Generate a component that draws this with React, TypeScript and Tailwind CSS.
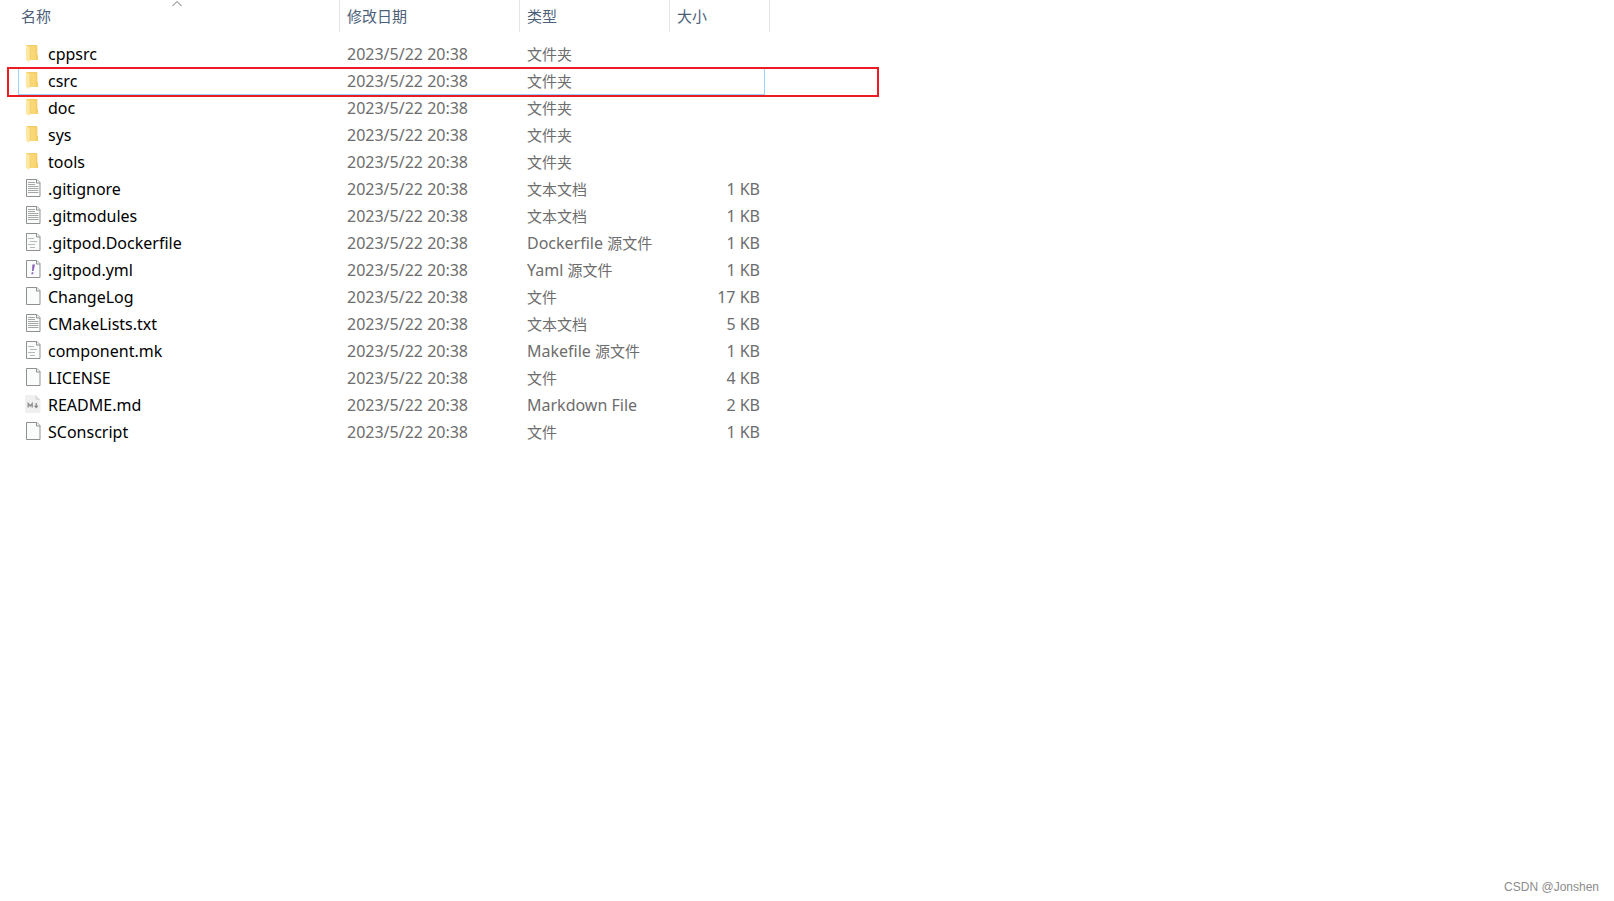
import React, { useState } from 'react'
import clsx from 'clsx'

type Kind = 'folder' | 'text' | 'source' | 'yaml' | 'blank' | 'markdown'

interface Entry {
  name: string
  kind: Kind
  type: string
  size?: string
}

const MODIFIED = '2023/5/22 20:38'

const ENTRIES: Entry[] = [
  { name: 'cppsrc', kind: 'folder', type: '文件夹' },
  { name: 'csrc', kind: 'folder', type: '文件夹' },
  { name: 'doc', kind: 'folder', type: '文件夹' },
  { name: 'sys', kind: 'folder', type: '文件夹' },
  { name: 'tools', kind: 'folder', type: '文件夹' },
  { name: '.gitignore', kind: 'text', type: '文本文档', size: '1 KB' },
  { name: '.gitmodules', kind: 'text', type: '文本文档', size: '1 KB' },
  { name: '.gitpod.Dockerfile', kind: 'source', type: 'Dockerfile 源文件', size: '1 KB' },
  { name: '.gitpod.yml', kind: 'yaml', type: 'Yaml 源文件', size: '1 KB' },
  { name: 'ChangeLog', kind: 'blank', type: '文件', size: '17 KB' },
  { name: 'CMakeLists.txt', kind: 'text', type: '文本文档', size: '5 KB' },
  { name: 'component.mk', kind: 'source', type: 'Makefile 源文件', size: '1 KB' },
  { name: 'LICENSE', kind: 'blank', type: '文件', size: '4 KB' },
  { name: 'README.md', kind: 'markdown', type: 'Markdown File', size: '2 KB' },
  { name: 'SConscript', kind: 'blank', type: '文件', size: '1 KB' },
]

function FileIcon({ kind }: { kind: Kind }) {
  if (kind === 'folder') {
    return (
      <svg className="w-4 h-[18px] shrink-0" viewBox="0 0 16 18" aria-hidden="true">
        <path d="M0 1h11.200v9.500l.8 1V16H3z" fill="#f9d775" />
        <path d="M0 1h11v1.200H3z" fill="#f3cb66" />
        <path d="M9.500 2h1.700v8.500l.8 1V16H9.500z" fill="#f5cd68" />
        <path d="M0 1l3.200 1.700q.8.500.8 1.500v11.600l-1 2.200L0 15.800z" fill="#ffe8a3" />
        <path d="M4 4v12" stroke="#efc65f" strokeWidth=".5" />
      </svg>
    )
  }

  if (kind === 'markdown') {
    return (
      <svg className="w-4 h-[18px] shrink-0 overflow-visible" viewBox="0 0 16 18" aria-hidden="true">
        <path d="M.5 0H9.500l5 5v11.500a1.500 1.500 0 0 1-1.500 1.500H.5A1.500 1.500 0 0 1-1 16.500v-15A1.500 1.500 0 0 1 .5 0z" fill="#f0f0f0" />
        <path d="M9.500 0l5 5h-4a1 1 0 0 1-1-1z" fill="#dadada" />
        <path d="M2.200 12.500v-4l2 2.500 2-2.500v4M10.200 8v4M8.500 10.600l1.700 1.900 1.700-1.900" fill="none" stroke="#8c8c8c" strokeWidth="1.300" />
      </svg>
    )
  }

  return (
    <svg className="w-4 h-[18px] shrink-0" viewBox="0 0 16 18" aria-hidden="true">
      <path d="M.5.5h10.500l3 3v14H.5z" fill="#fafbfb" stroke="#8f9191" />
      <path d="M10.500.5v3.500H14" fill="#f2f2f2" stroke="#8f9191" />
      {kind === 'text' && (
        <path d="M2 3.500h7M2 5.500h7M2 7.500h10.500M2 9.500h10.500M2 11.500h10.500M2 13.500h10.500" stroke="#a6a6a6" />
      )}
      {kind === 'source' && (
        <path d="M2 5.500h6M4 8.500h7M2 11.500h7M4 14.500h5" stroke="#b8b8b8" />
      )}
      {kind === 'yaml' && (
        <path d="M6.400 4.500H9L7.500 11H6zM5.700 12.300h1.800l-.4 2H5.300z" fill="#8a63b8" />
      )}
    </svg>
  )
}

// Latin runs are set a step larger than the Chinese ones
function TypeLabel({ text }: { text: string }) {
  return (
    <>
      {text.split(/([\x20-\x7e]+)/).filter(Boolean).map((run, i) => (
        <span key={i} className={/^[\x20-\x7e]/.test(run) ? 'text-[16px]' : 'text-[15px]'}>
          {run}
        </span>
      ))}
    </>
  )
}

export default function App() {
  const [ascending, setAscending] = useState(true)
  const rows = ascending ? ENTRIES : [...ENTRIES].reverse()

  const headClass = 'relative p-0 pl-[7px] border-r border-[#e5e5e5] text-left font-normal'
  const cellClass = 'pt-px pb-[2px] pr-0 pl-[7px] whitespace-nowrap'

  return (
    <div className="min-h-screen flex flex-col bg-white font-['Noto_Sans','Noto_Sans_CJK_SC',sans-serif]">
      <main className="flex-1 pl-[14px]">
        <table className="table-fixed w-[756px] border-separate border-spacing-0 text-[16px] leading-6 text-[#6d6d6d]">
          <colgroup>
            <col className="w-[326px]" />
            <col className="w-[180px]" />
            <col className="w-[150px]" />
            <col className="w-[100px]" />
          </colgroup>
          <thead className="text-[15px] text-[#4c607a]">
            <tr className="h-8">
              <th scope="col" className={headClass}>
                <button type="button" onClick={() => setAscending(a => !a)} className="w-full text-left">
                  名称
                </button>
                <svg
                  className={clsx('absolute top-0 left-1/2 -translate-x-1/2 w-[10px] h-[7px]', !ascending && 'rotate-180')}
                  viewBox="0 0 10 7"
                  fill="none"
                  aria-hidden="true"
                >
                  <path d="M.5 6L5 1.500 9.500 6" stroke="#6d6d6d" />
                </svg>
              </th>
              <th scope="col" className={headClass}>修改日期</th>
              <th scope="col" className={headClass}>类型</th>
              <th scope="col" className={headClass}>大小</th>
            </tr>
          </thead>
          <tbody className="before:block before:h-[9px]">
            {rows.map(entry => (
              <tr key={entry.name} className="relative h-[27px]">
                <td className="pt-px pb-[2px] pr-0 pl-3 text-black">
                  <div className="flex items-start gap-[6px]">
                    <span className="flex pt-[2px]">
                      <FileIcon kind={entry.kind} />
                    </span>
                    <span>{entry.name}</span>
                  </div>
                  {entry.name === 'csrc' && (
                    <>
                      <span className="absolute inset-y-0 left-1 right-[5px] border border-[#99d1ff] pointer-events-none" />
                      <span className="absolute -top-px -bottom-[2px] -left-[7px] -right-[109px] border-2 border-[#ed1c24] pointer-events-none" />
                    </>
                  )}
                </td>
                <td className={cellClass}>{MODIFIED}</td>
                <td className={cellClass}><TypeLabel text={entry.type} /></td>
                <td className="pt-px pb-[2px] pl-0 pr-[10px] text-right whitespace-nowrap">{entry.size}</td>
              </tr>
            ))}
          </tbody>
        </table>
      </main>
      <footer className="px-[15px] pb-[6px] text-right text-[12px] leading-4 text-[#8c8c8c] font-['Liberation_Sans',sans-serif]">
        CSDN @Jonshen
      </footer>
    </div>
  )
}
